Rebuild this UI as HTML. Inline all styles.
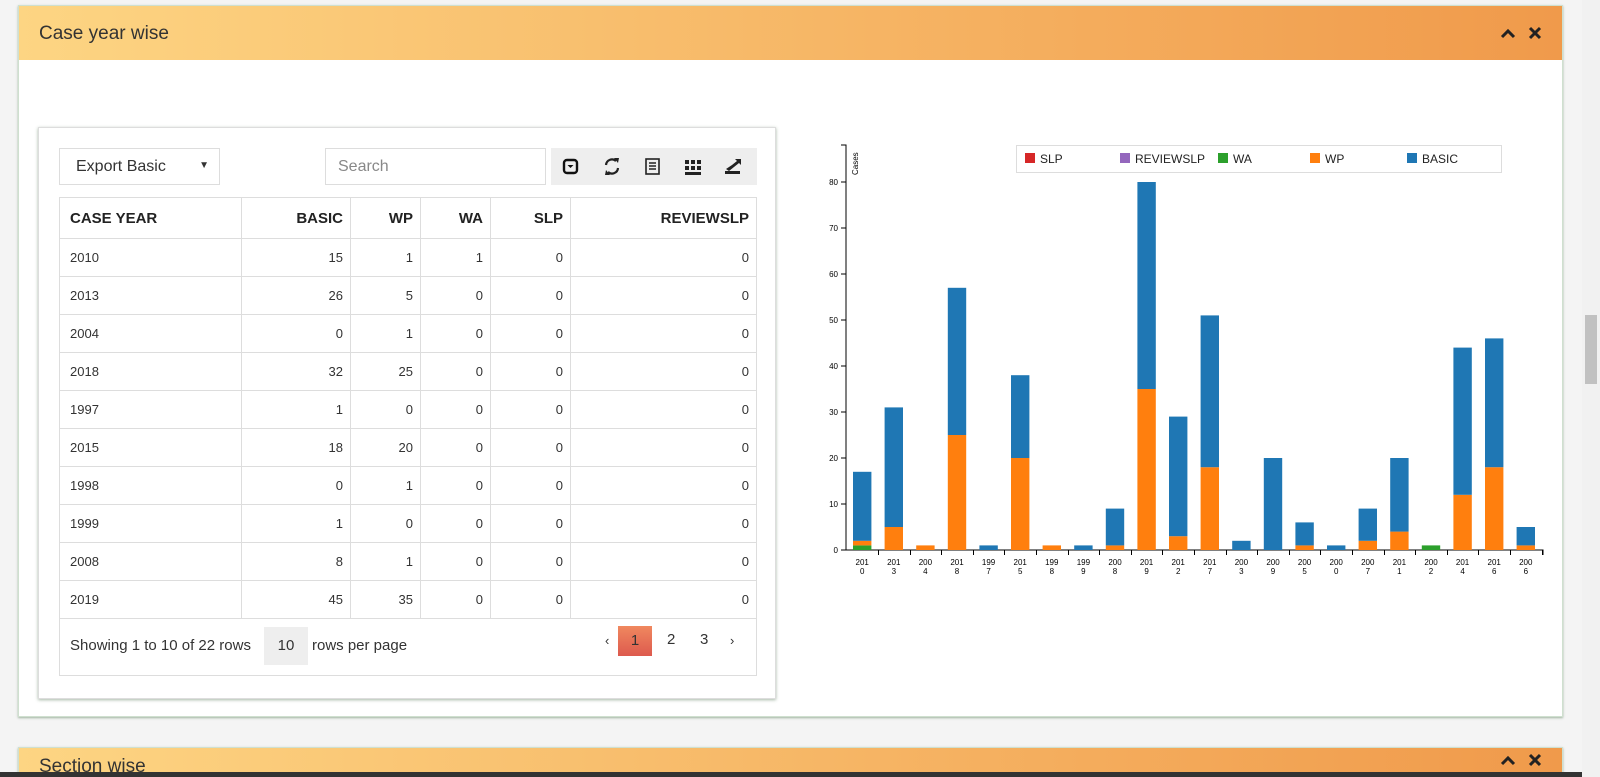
<!DOCTYPE html>
<html style="overflow:hidden"><head><meta charset="utf-8"><style>
*{box-sizing:border-box;margin:0;padding:0}
body{width:1600px;height:777px;overflow:hidden;background:#f4f4f4;font-family:"Liberation Sans",sans-serif;color:#333;position:relative}
.panel{position:absolute;left:18px;width:1545px;background:#fff;box-shadow:0 1px 2px rgba(80,120,80,.5);border:1px solid #cfe0cf;overflow:hidden}
.hdr{height:54px;background:linear-gradient(to right,#fdd583,#f09a4b);position:relative}
.hdr .t{position:absolute;left:20px;top:17px;font-size:19px;color:#333}
.hdr svg{position:absolute;right:18px;top:20px}
.card{position:absolute;left:38px;top:127px;width:738px;height:572px;background:#fff;border:1px solid #ddd;box-shadow:0 1px 3px rgba(60,100,60,.45)}
.sel{position:absolute;left:20px;top:20px;width:161px;height:37px;border:1px solid #ddd;font-size:16px;padding:9px 16px}
.sel span{position:absolute;right:10px;top:11px;font-size:10px}
.srch{position:absolute;left:286px;top:20px;width:221px;height:37px;border:1px solid #ddd;font-size:16px;padding:9px 12px;color:#888}
.tb{position:absolute;left:512px;top:20px;width:206px;height:37px;background:#eee}
table{position:absolute;left:20px;top:69px;border-collapse:collapse;width:698px}
td,th{border:1px solid #ddd;font-size:13px;text-align:right;padding:0 7px}
th{font-size:15px;height:41px;font-weight:bold;color:#222}
td{height:38px}
td:first-child,th:first-child{text-align:left;padding-left:10px}
.foot{position:absolute;left:20px;top:480px;width:698px;height:68px;border:1px solid #ddd;border-top:none;font-size:15px}
.pg{position:absolute;font-size:15px}
</style></head><body>
<div class="panel" style="top:5px;height:712px">
 <div class="hdr"><div class="t">Case year wise</div><svg width="44" height="14" viewBox="0 0 44 14"><path d="M2 11l6-6 6 6" fill="none" stroke="#222" stroke-width="3"/><path d="M30 2l10 10M40 2l-10 10" stroke="#222" stroke-width="3"/></svg></div>
</div>
<div class="card">
 <div class="sel">Export Basic<span>▼</span></div>
 <div class="srch">Search</div>
 <div class="tb"><svg width="206" height="37" viewBox="0 0 206 37">
  <rect x="13" y="12" width="13" height="13" rx="3" fill="none" stroke="#111" stroke-width="2.4"/><path d="M16.5 17h6l-3 3z" fill="#111"/>
  <path d="M55 17a6 6 0 0 1 10-4M67 20a6 6 0 0 1-10 4" fill="none" stroke="#222" stroke-width="2.2"/><path d="M63 10l5 0-1 5zM59 27l-5 0 1-5z" fill="#222"/>
  <rect x="95" y="11" width="13" height="15" fill="none" stroke="#222" stroke-width="1.6"/><path d="M98 15h7M98 18h7M98 21h7" stroke="#222" stroke-width="1.4"/>
  <path d="M134 12h4v4h-4zM140 12h4v4h-4zM146 12h4v4h-4zM134 18h4v4h-4zM140 18h4v4h-4zM146 18h4v4h-4zM134 24h16v3h-16z" fill="#222"/>
  <path d="M174 26h15v-3h-15zM175 21l6-4 5-4 -2-2h6v6l-2-2-10 8z" fill="#222"/>
 </svg></div>
 <table>
  <tr><th style="width:182px">CASE YEAR</th><th style="width:109px">BASIC</th><th style="width:70px">WP</th><th style="width:70px">WA</th><th style="width:80px">SLP</th><th>REVIEWSLP</th></tr>
  <tr><td>2010</td><td>15</td><td>1</td><td>1</td><td>0</td><td>0</td></tr>
  <tr><td>2013</td><td>26</td><td>5</td><td>0</td><td>0</td><td>0</td></tr>
  <tr><td>2004</td><td>0</td><td>1</td><td>0</td><td>0</td><td>0</td></tr>
  <tr><td>2018</td><td>32</td><td>25</td><td>0</td><td>0</td><td>0</td></tr>
  <tr><td>1997</td><td>1</td><td>0</td><td>0</td><td>0</td><td>0</td></tr>
  <tr><td>2015</td><td>18</td><td>20</td><td>0</td><td>0</td><td>0</td></tr>
  <tr><td>1998</td><td>0</td><td>1</td><td>0</td><td>0</td><td>0</td></tr>
  <tr><td>1999</td><td>1</td><td>0</td><td>0</td><td>0</td><td>0</td></tr>
  <tr><td>2008</td><td>8</td><td>1</td><td>0</td><td>0</td><td>0</td></tr>
  <tr><td>2019</td><td>45</td><td>35</td><td>0</td><td>0</td><td>0</td></tr>
 </table>
 <div class="foot">
  <div class="pg" style="left:10px;top:29px">Showing 1 to 10 of 22 rows</div>
  <div class="pg" style="left:204px;top:19px;width:44px;height:38px;background:#eee;text-align:center;padding-top:10px">10</div>
  <div class="pg" style="left:252px;top:29px">rows per page</div>
  <div class="pg" style="left:545px;top:25px;font-size:13px">‹</div>
  <div class="pg" style="left:558px;top:18px;width:34px;height:30px;background:linear-gradient(#f0885f,#dd5a4e);text-align:center;padding-top:6px;color:#333">1</div>
  <div class="pg" style="left:607px;top:23px">2</div>
  <div class="pg" style="left:640px;top:23px">3</div>
  <div class="pg" style="left:670px;top:25px;font-size:13px">›</div>
 </div>
</div>
<svg id="ch" style="position:absolute;left:0;top:0" width="1600" height="777"></svg>
<div class="panel" style="top:747px;height:30px"><div class="hdr"><div class="t" style="top:8px">Section wise</div><svg width="44" height="14" viewBox="0 0 44 14" style="top:5px"><path d="M2 11l6-6 6 6" fill="none" stroke="#222" stroke-width="3"/><path d="M30 2l10 10M40 2l-10 10" stroke="#222" stroke-width="3"/></svg></div></div>
<div style="position:absolute;left:0;top:772px;width:1582px;height:5px;background:#333"></div>
<div style="position:absolute;left:1582px;top:0;width:18px;height:777px;background:#f1f1f1"></div>
<div style="position:absolute;left:1585px;top:315px;width:12px;height:69px;background:#c1c1c1"></div>
<script>
var d=[["2010",15,1,1],["2013",26,5,0],["2004",0,1,0],["2018",32,25,0],["1997",1,0,0],["2015",18,20,0],["1998",0,1,0],["1999",1,0,0],["2008",8,1,0],["2019",45,35,0],["2012",26,3,0],["2017",33,18,0],["2003",2,0,0],["2009",20,0,0],["2005",5,1,0],["2000",1,0,0],["2007",7,2,0],["2011",16,4,0],["2002",0,0,1],["2014",32,12,0],["2016",28,18,0],["2006",4,1,0]];
var s='',y0=550,k=4.6,ax=846;
s+='<path d="M'+(ax-5)+' 145H'+ax+'V'+y0+'H1543V'+(y0+5)+'" fill="none" stroke="#000"/>';
for(var v=0;v<=80;v+=10){var y=y0-v*k;s+='<line x1="'+(ax-5)+'" x2="'+ax+'" y1="'+y+'" y2="'+y+'" stroke="#000"/><text x="'+(ax-8)+'" y="'+(y+3)+'" font-size="8" text-anchor="end" font-family="Liberation Sans">'+v+'</text>';}
s+='<text transform="translate(858,175) rotate(-90)" font-size="8" font-family="Liberation Sans">Cases</text>';
d.forEach(function(r,i){var x=853+i*31.6,c=0;
 [[r[3],'#2ca02c'],[r[2],'#ff7f0e'],[r[1],'#1f77b4']].forEach(function(p){if(p[0]){s+='<rect x="'+x+'" y="'+(y0-(c+p[0])*k)+'" width="18.4" height="'+(p[0]*k)+'" fill="'+p[1]+'"/>';c+=p[0];}});
 var cx=x+9.2,tx=Math.round(cx+15.8)+0.5;s+='<line x1="'+tx+'" x2="'+tx+'" y1="'+y0+'" y2="'+(y0+5)+'" stroke="#000"/>';
 s+='<text x="'+cx+'" y="'+(y0+15)+'" font-size="8" text-anchor="middle" font-family="Liberation Sans">'+r[0].slice(0,3)+'</text><text x="'+cx+'" y="'+(y0+24)+'" font-size="8" text-anchor="middle" font-family="Liberation Sans">'+r[0].slice(3)+'</text>';});
s+='<rect x="1016.5" y="145.5" width="485" height="27" fill="#fff" stroke="#ddd"/>';
[["SLP","#d62728",1025],["REVIEWSLP","#9467bd",1120],["WA","#2ca02c",1218],["WP","#ff7f0e",1310],["BASIC","#1f77b4",1407]].forEach(function(l){s+='<rect x="'+l[2]+'" y="153" width="10" height="10" fill="'+l[1]+'"/><text x="'+(l[2]+15)+'" y="163" font-size="12" font-family="Liberation Sans" fill="#222">'+l[0]+'</text>';});
document.getElementById('ch').innerHTML=s;
</script>
</body></html>
